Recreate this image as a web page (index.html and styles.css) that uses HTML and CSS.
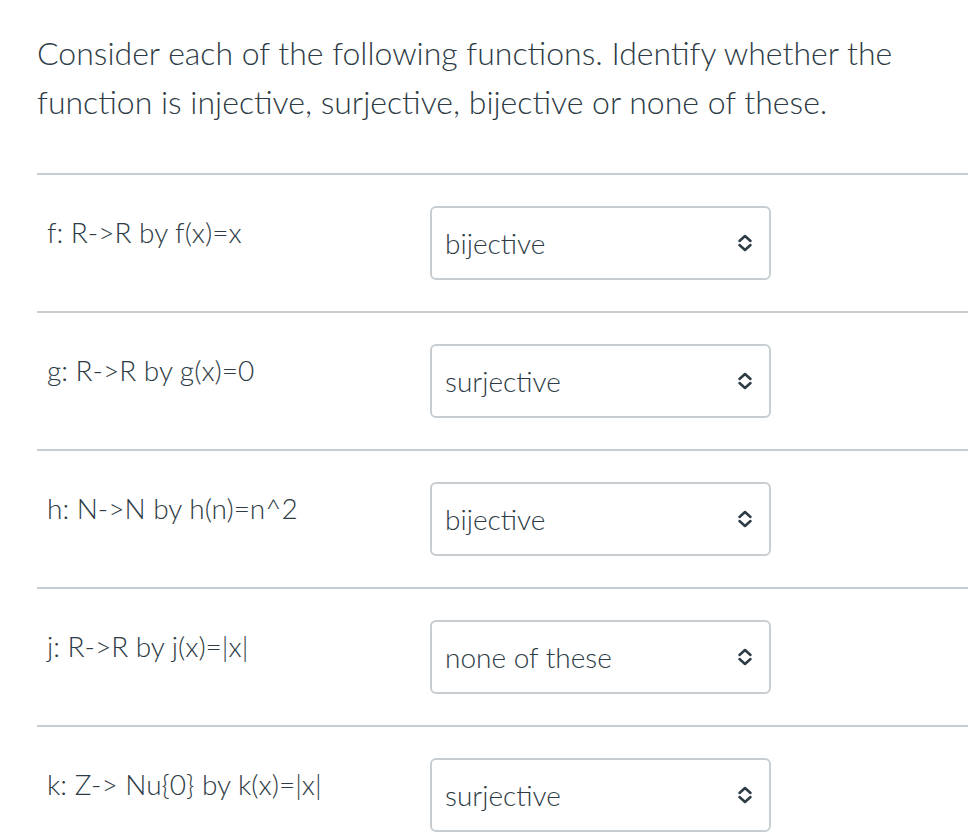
FILE: index.html
```html
<!DOCTYPE html>
<html lang="en">
<head>
  <meta charset="UTF-8">
  <title>Quiz question</title>
  <link rel="stylesheet" href="styles.css">
</head>
<body>
  <div class="question">
    <p class="prompt">Consider each of the following functions. Identify whether the function is injective, surjective, bijective or none of these.</p>

    <div class="match-row">
      <div class="label">f: R-&gt;R by f(x)=x</div>
      <div class="select"><span>bijective</span><svg viewBox="0 0 16 20" width="16" height="20"><path d="M2.5 8 L8 3 L13.5 8 M2.5 12 L8 17 L13.5 12" /></svg></div>
    </div>
    <div class="match-row">
      <div class="label">g: R-&gt;R by g(x)=0</div>
      <div class="select"><span>surjective</span><svg viewBox="0 0 16 20" width="16" height="20"><path d="M2.5 8 L8 3 L13.5 8 M2.5 12 L8 17 L13.5 12" /></svg></div>
    </div>
    <div class="match-row">
      <div class="label">h: N-&gt;N by h(n)=n^2</div>
      <div class="select"><span>bijective</span><svg viewBox="0 0 16 20" width="16" height="20"><path d="M2.5 8 L8 3 L13.5 8 M2.5 12 L8 17 L13.5 12" /></svg></div>
    </div>
    <div class="match-row">
      <div class="label">j: R-&gt;R by j(x)=|x|</div>
      <div class="select"><span>none of these</span><svg viewBox="0 0 16 20" width="16" height="20"><path d="M2.5 8 L8 3 L13.5 8 M2.5 12 L8 17 L13.5 12" /></svg></div>
    </div>
    <div class="match-row">
      <div class="label">k: Z-&gt; Nu{0} by k(x)=|x|</div>
      <div class="select"><span>surjective</span><svg viewBox="0 0 16 20" width="16" height="20"><path d="M2.5 8 L8 3 L13.5 8 M2.5 12 L8 17 L13.5 12" /></svg></div>
    </div>
  </div>
</body>
</html>
```

FILE: styles.css
```css
body {
  margin: 0;
  background: #fff;
  font-family: Lato, "Open Sans", sans-serif;
  font-weight: 300;
  color: #2d3b45;
}
.question {
  padding: 28px 0 0 37px;
}
.prompt {
  margin: 0 0 47px;
  font-size: 32px;
  line-height: 49px;
  max-width: 900px;
}
.match-row {
  display: flex;
  border-top: 2px solid #c7cdd1;
  padding: 31px 0 31px 10px;
}
.label {
  width: 383px;
  padding-top: 10px;
  font-size: 28px;
  line-height: 33px;
}
.select {
  box-sizing: border-box;
  width: 341px;
  height: 74px;
  border: 2px solid #c7cdd1;
  border-radius: 6px;
  display: flex;
  align-items: center;
  justify-content: space-between;
  padding: 0 16px 0 13px;
  font-size: 28px;
}
.select svg path {
  fill: none;
  stroke: #2d3b45;
  stroke-width: 2.5;
  stroke-linecap: round;
  stroke-linejoin: round;
}
```
